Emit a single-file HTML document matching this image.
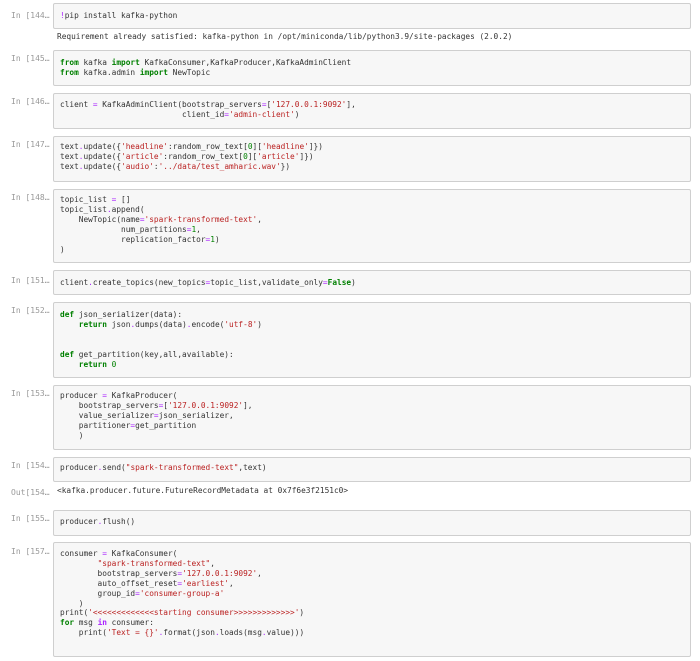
<!DOCTYPE html>
<html><head><meta charset="utf-8"><style>
body{margin:0;width:700px;height:661px;background:#fff;position:relative;overflow:hidden;font-family:"DejaVu Sans Mono","Liberation Mono",monospace;}
.c{position:absolute;left:53px;width:638px;background:#f7f7f7;border:1px solid #cfcfcf;box-sizing:border-box;border-radius:2px}
pre{position:absolute;left:60px;margin:0;font-family:"DejaVu Sans Mono","Liberation Mono",monospace;font-size:7.8px;line-height:9.9px;color:#333;white-space:pre}
.p{position:absolute;left:11px;font-size:8px;color:#999;line-height:9.9px}
.k{color:#008000;font-weight:bold}.s{color:#ba2121}.o{color:#aa22ff}.n{color:#008000}
</style></head><body>
<div class="c" style="top:3px;height:26px"></div><div class="p" style="top:11px">In [144…</div>
<pre style="top:11px"><span class="o">!</span>pip install kafka-python</pre>
<pre style="left:57px;top:32px">Requirement already satisfied: kafka-python in /opt/miniconda/lib/python3.9/site-packages (2.0.2)</pre>

<div class="c" style="top:50px;height:36px"></div><div class="p" style="top:54px">In [145…</div>
<pre style="top:58px"><span class="k">from</span> kafka <span class="k">import</span> KafkaConsumer,KafkaProducer,KafkaAdminClient
<span class="k">from</span> kafka.admin <span class="k">import</span> NewTopic</pre>

<div class="c" style="top:93px;height:36px"></div><div class="p" style="top:97px">In [146…</div>
<pre style="top:100px">client <span class="o">=</span> KafkaAdminClient(bootstrap_servers<span class="o">=</span>[<span class="s">'127.0.0.1:9092'</span>],
                          client_id<span class="o">=</span><span class="s">'admin-client'</span>)</pre>

<div class="c" style="top:136px;height:46px"></div><div class="p" style="top:140px">In [147…</div>
<pre style="top:142px">text<span class="o">.</span>update({<span class="s">'headline'</span>:random_row_text[<span class="n">0</span>][<span class="s">'headline'</span>]})
text<span class="o">.</span>update({<span class="s">'article'</span>:random_row_text[<span class="n">0</span>][<span class="s">'article'</span>]})
text<span class="o">.</span>update({<span class="s">'audio'</span>:<span class="s">'../data/test_amharic.wav'</span>})</pre>

<div class="c" style="top:189px;height:74px"></div><div class="p" style="top:193px">In [148…</div>
<pre style="top:195px">topic_list <span class="o">=</span> []
topic_list<span class="o">.</span>append(
    NewTopic(name<span class="o">=</span><span class="s">'spark-transformed-text'</span>,
             num_partitions<span class="o">=</span><span class="n">1</span>,
             replication_factor<span class="o">=</span><span class="n">1</span>)
)</pre>

<div class="c" style="top:270px;height:25px"></div><div class="p" style="top:276px">In [151…</div>
<pre style="top:278px">client<span class="o">.</span>create_topics(new_topics<span class="o">=</span>topic_list,validate_only<span class="o">=</span><span class="k">False</span>)</pre>

<div class="c" style="top:302px;height:76px"></div><div class="p" style="top:306px">In [152…</div>
<pre style="top:310px"><span class="k">def</span> json_serializer(data):
    <span class="k">return</span> json<span class="o">.</span>dumps(data)<span class="o">.</span>encode(<span class="s">'utf-8'</span>)


<span class="k">def</span> get_partition(key,all,available):
    <span class="k">return</span> <span class="n">0</span></pre>

<div class="c" style="top:385px;height:65px"></div><div class="p" style="top:389px">In [153…</div>
<pre style="top:391px">producer <span class="o">=</span> KafkaProducer(
    bootstrap_servers<span class="o">=</span>[<span class="s">'127.0.0.1:9092'</span>],
    value_serializer<span class="o">=</span>json_serializer,
    partitioner<span class="o">=</span>get_partition
    )</pre>

<div class="c" style="top:457px;height:25px"></div><div class="p" style="top:461px">In [154…</div>
<pre style="top:463px">producer<span class="o">.</span>send(<span class="s">"spark-transformed-text"</span>,text)</pre>
<div class="p" style="top:488px">Out[154…</div>
<pre style="left:57px;top:486px">&lt;kafka.producer.future.FutureRecordMetadata at 0x7f6e3f2151c0&gt;</pre>

<div class="c" style="top:510px;height:26px"></div><div class="p" style="top:514px">In [155…</div>
<pre style="top:517px">producer<span class="o">.</span>flush()</pre>

<div class="c" style="top:542px;height:115px"></div><div class="p" style="top:547px">In [157…</div>
<pre style="top:549px">consumer <span class="o">=</span> KafkaConsumer(
        <span class="s">"spark-transformed-text"</span>,
        bootstrap_servers<span class="o">=</span><span class="s">'127.0.0.1:9092'</span>,
        auto_offset_reset<span class="o">=</span><span class="s">'earliest'</span>,
        group_id<span class="o">=</span><span class="s">'consumer-group-a'</span>
    )
print(<span class="s">'&lt;&lt;&lt;&lt;&lt;&lt;&lt;&lt;&lt;&lt;&lt;&lt;&lt;starting consumer&gt;&gt;&gt;&gt;&gt;&gt;&gt;&gt;&gt;&gt;&gt;&gt;&gt;'</span>)
<span class="k">for</span> msg <span class="o" style="font-weight:bold">in</span> consumer:
    print(<span class="s">'Text = {}'</span><span class="o">.</span>format(json<span class="o">.</span>loads(msg<span class="o">.</span>value)))</pre>
</body></html>
